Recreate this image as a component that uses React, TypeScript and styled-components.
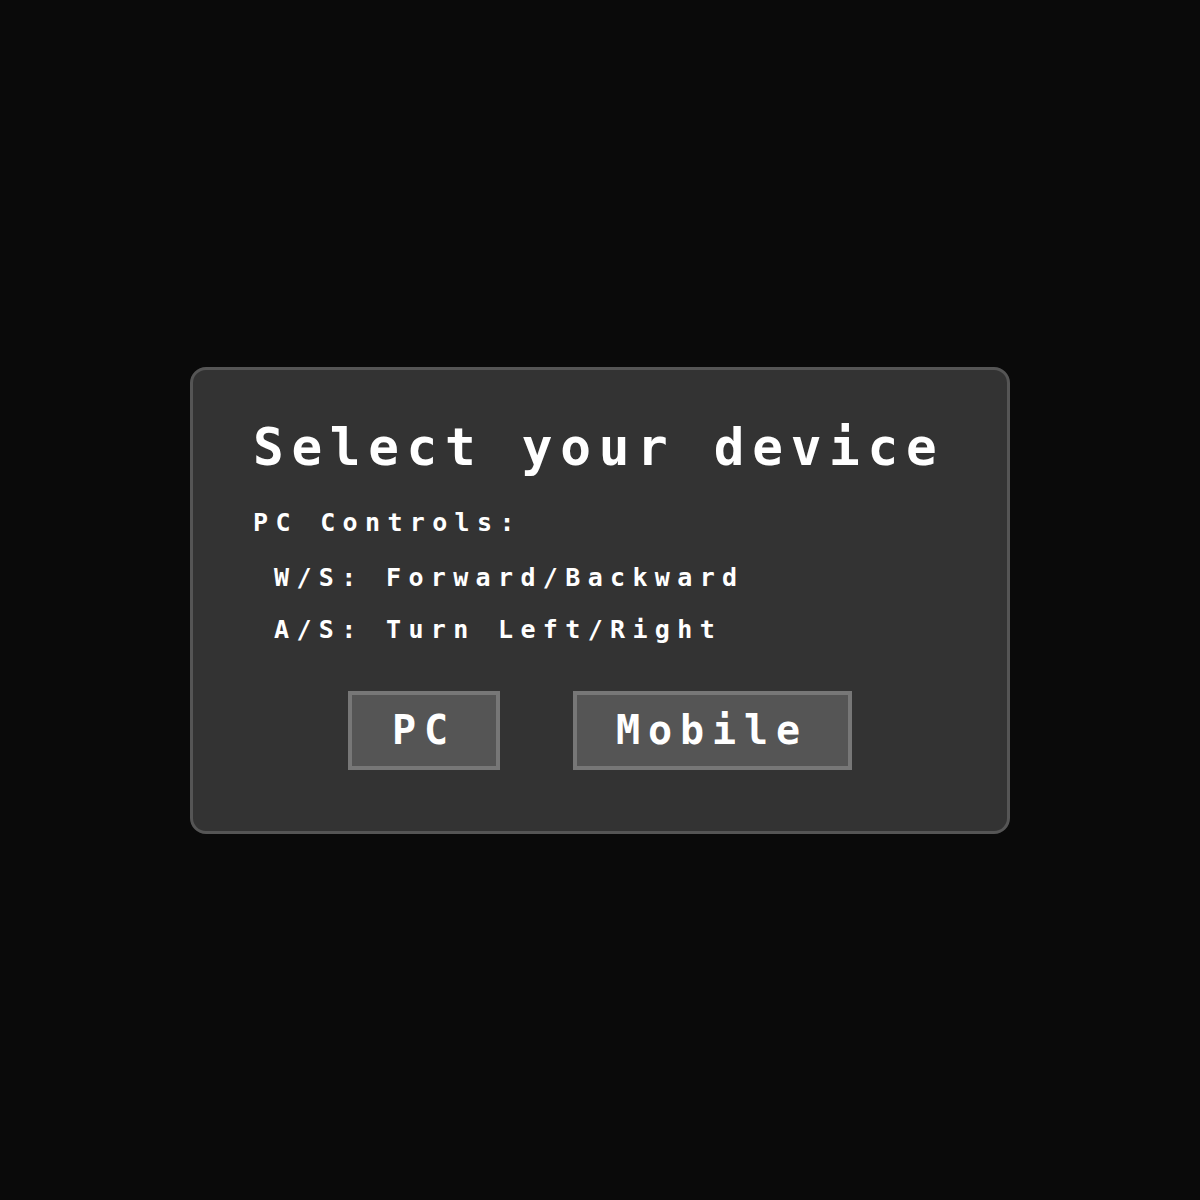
import React from 'react';
import styled, { createGlobalStyle } from 'styled-components';

const GlobalStyle = createGlobalStyle`
    html, body {
        margin: 0;
        padding: 0;
        background: #0a0a0a;
    }

    #root {
        min-height: 100vh;
    }
`;

const Screen = styled.div`
    min-height: 100vh;
    display: flex;
    align-items: center;
    justify-content: center;
    font-family: "DejaVu Sans Mono", "Liberation Mono", monospace;
    font-weight: 700;
    color: #ffffff;
`;

const Card = styled.div`
    box-sizing: border-box;
    width: 820px;
    padding: 48px 60px 61px;
    background: #333333;
    border: 3px solid #555555;
    border-radius: 16px;
    display: flex;
    flex-direction: column;
`;

const Title = styled.h1`
    margin: 0 0 30px;
    font-size: 51px;
    line-height: 60px;
    letter-spacing: 7.7px;
    font-weight: 700;
    white-space: nowrap;
`;

const Line = styled.div`
    font-size: 25px;
    line-height: 30px;
    letter-spacing: 7.35px;
    white-space: pre;
    padding-left: ${(props: { indent?: boolean }) => props.indent ? '21px' : '0'};
    margin-bottom: ${(props: { gap: number }) => props.gap}px;
`;

const Buttons = styled.div`
    display: flex;
    justify-content: center;
    gap: 73px;
`;

const Button = styled.button`
    box-sizing: border-box;
    height: 79px;
    padding: 0 39.5px;
    background: #555555;
    border: 4px solid #777777;
    border-radius: 0;
    color: #ffffff;
    font-family: inherit;
    font-weight: 700;
    font-size: 40px;
    letter-spacing: 7.92px;
    cursor: pointer;
`;

const controls = [
    { keys: 'W/S:', action: 'Forward/Backward' },
    { keys: 'A/S:', action: 'Turn Left/Right' },
];

export default function App() {
    return (
        <Screen>
            <GlobalStyle />
            <Card>
                <Title>Select your device</Title>
                <Line gap={25.5}>PC Controls:</Line>
                {controls.map((c, i) => (
                    <Line key={c.keys} indent gap={i === 0 ? 22 : 45.5}>
                        {c.keys} {c.action}
                    </Line>
                ))}
                <Buttons>
                    <Button>PC</Button>
                    <Button>Mobile</Button>
                </Buttons>
            </Card>
        </Screen>
    );
}
